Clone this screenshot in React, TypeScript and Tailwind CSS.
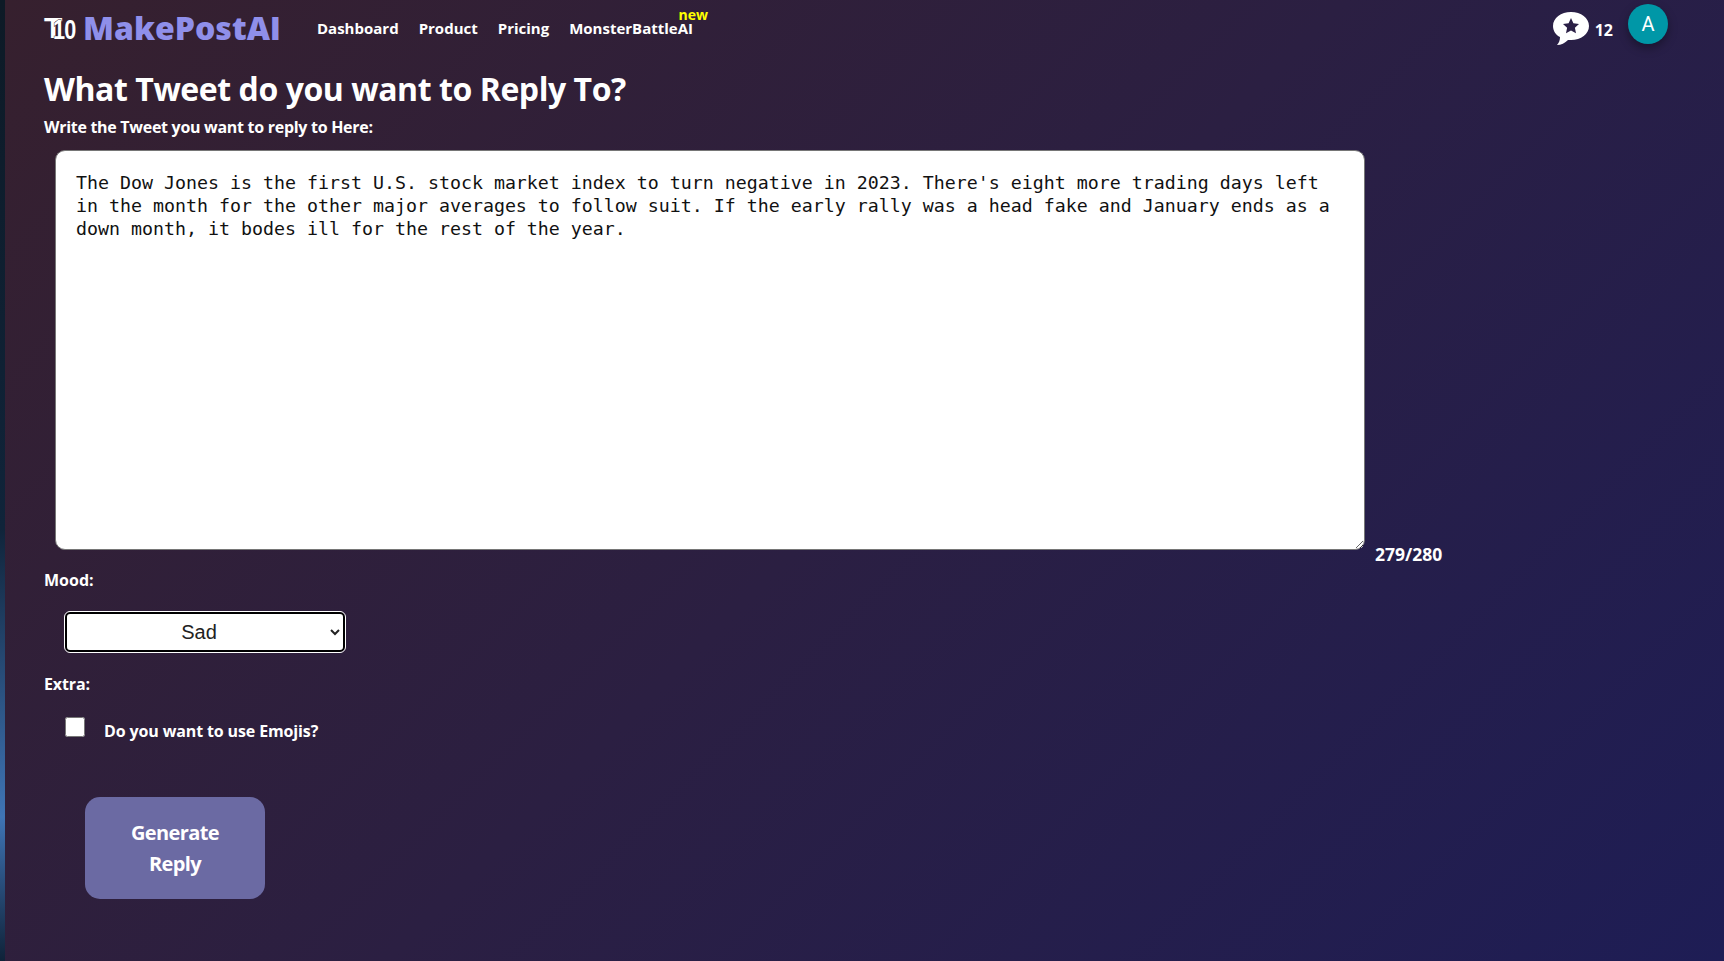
const TWEET =
  "The Dow Jones is the first U.S. stock market index to turn negative in 2023. There's eight more trading days left in the month for the other major averages to follow suit. If the early rally was a head fake and January ends as a down month, it bodes ill for the rest of the year."

const SANS = "font-['Open_Sans',sans-serif]"

function Logo() {
  return (
    <div className="flex items-center">
      <div className="relative h-[28px] w-[31px] font-['Liberation_Sans',sans-serif] font-bold text-white">
        <span className="absolute left-0 top-[-2px] text-[30px] leading-[32px]">T</span>
        <span className="absolute left-[9px] top-[2px] origin-left scale-x-[0.8] text-[27px] leading-[28px] tracking-[-1px] text-white [-webkit-text-stroke:1px_#32202f] [paint-order:stroke_fill]">
          10
        </span>
      </div>
      <span className="ml-[8px] font-['Open_Sans',sans-serif] text-[32px] font-extrabold leading-[36px] text-[#8f8fea]">
        MakePostAI
      </span>
    </div>
  )
}

function Nav() {
  return (
    <nav className={`ml-[36px] flex items-center gap-[20px] text-[15px] font-bold leading-[20px] text-white ${SANS}`}>
      <a>Dashboard</a>
      <a>Product</a>
      <a>Pricing</a>
      <a className="relative">
        MonsterBattleAI
        <span className="absolute right-[-15px] top-[-11px] text-[14px] leading-[16px] text-[#ffff00]">new</span>
      </a>
    </nav>
  )
}

function CreditsIcon() {
  return (
    <svg width="38" height="36" viewBox="0 0 38 36" className="block">
      <path
        d="M19 1C9 1 1 7 1 15c0 5 3 9 7 11 0 3-1 6-3 8 4 0 8-2 11-5 1 0 2 0 3 0 10 0 18-6 18-14S29 1 19 1z"
        fill="#fff"
      />
      <path
        d="M19 7l2.400 5.200 5.600.7-4.100 3.800 1.100 5.600-5-2.800-5 2.800 1.100-5.600-4.100-3.800 5.600-.7z"
        fill="#2b1f46"
      />
    </svg>
  )
}

export default function App() {
  return (
    <div className="flex h-[961px] w-[1724px] overflow-hidden">
      {/* strip of the page behind, left edge */}
      <div className="w-[5px] shrink-0 bg-[linear-gradient(180deg,#0d1a26_0%,#10243a_55%,#3f74b5_85%,#0f2238_100%)]" />
      <main className="relative min-w-0 flex-1 bg-[linear-gradient(135deg,#36202e_0%,#2b1f42_50%,#1e1d55_100%)] pl-[39px]">
        <header className="flex h-[58px] items-center pb-[2px]">
          <Logo />
          <Nav />
          <div className="ml-auto mr-[56px] flex items-start self-start">
            <div className="mt-[11px] flex items-center">
              <CreditsIcon />
              <span className={`ml-[5px] mt-[2px] text-[16px] font-bold text-white ${SANS}`}>12</span>
            </div>
            <div className="ml-[15px] mt-[4px] flex h-[40px] w-[40px] items-center justify-center rounded-full bg-[#0097a7] font-['Roboto',sans-serif] text-[20px] text-white shadow-[0_4px_10px_rgba(0,0,0,0.35)]">
              A
            </div>
          </div>
        </header>

        <h1 className={`mt-[12px] text-[32px] font-bold leading-[38px] tracking-[-0.44px] text-white ${SANS}`}>
          What Tweet do you want to Reply To?
        </h1>
        <label className={`mt-[10px] block text-[16px] font-bold leading-[19px] tracking-[-0.29px] text-white ${SANS}`}>
          Write the Tweet you want to reply to Here:
        </label>

        <div className="mt-[13px] ml-[11px] flex items-end">
          <textarea
            readOnly
            value={TWEET}
            className="h-[400px] w-[1310px] rounded-[10px] border border-[#767676] bg-white px-[20px] py-[20px] font-['DejaVu_Sans_Mono',monospace] text-[18.27px] leading-[23px] text-[#111]"
          />
          <span className={`mb-[-14px] ml-[10px] text-[17.5px] font-bold leading-[20px] text-white ${SANS}`}>279/280</span>
        </div>

        <label className={`mt-[20px] block text-[16px] font-bold leading-[20px] text-white ${SANS}`}>Mood:</label>
        <select
          defaultValue="Sad"
          className="ml-[21px] mt-[22px] block h-[40px] w-[280px] rounded-[5px] border-2 border-black bg-white text-center font-['Liberation_Sans',sans-serif] text-[20px] text-[#222] outline-1 outline-white"
        >
          <option>Sad</option>
          <option>Happy</option>
          <option>Angry</option>
        </select>

        <label className={`mt-[22px] block text-[16px] font-bold leading-[20px] tracking-[-0.1px] text-white ${SANS}`}>Extra:</label>
        <div className="ml-[21px] mt-[23px] flex items-start">
          <input type="checkbox" className="m-0 h-[20px] w-[20px] bg-white" />
          <span className={`ml-[19px] mt-[4px] text-[16px] font-bold leading-[20px] tracking-[-0.13px] text-white ${SANS}`}>
            Do you want to use Emojis?
          </span>
        </div>

        <button className={`ml-[41px] mt-[56px] flex h-[102px] w-[180px] items-center justify-center rounded-[15px] bg-[#6b6aa3] px-[30px] text-[20px] font-bold leading-[31px] tracking-[-0.6px] text-white ${SANS}`}>
          Generate Reply
        </button>
      </main>
    </div>
  )
}
